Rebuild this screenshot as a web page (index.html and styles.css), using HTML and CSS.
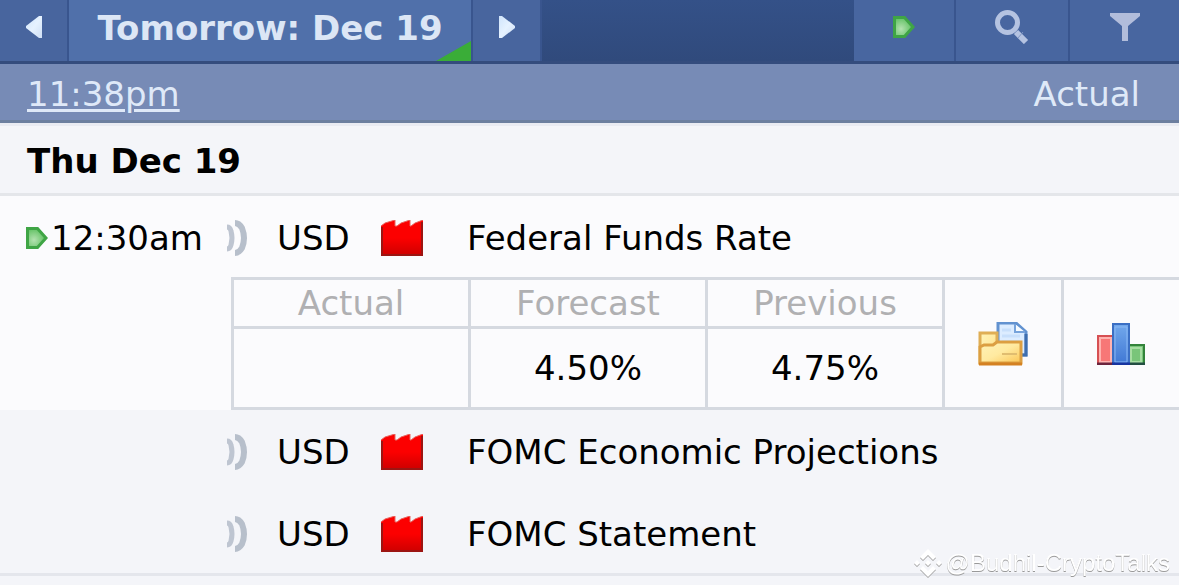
FILE: index.html
```html
<!DOCTYPE html>
<html lang="en">
<head>
<meta charset="utf-8">
<meta name="viewport" content="width=device-width, initial-scale=1">
<title>Economic Calendar</title>
<link rel="stylesheet" href="styles.css">
</head>
<body>
<svg class="defs" aria-hidden="true">
  <defs>
    <radialGradient id="green" cx=".35" cy=".6" r=".6"><stop offset="0" stop-color="#b4e2b0"/><stop offset="1" stop-color="#62c164"/></radialGradient>
    <linearGradient id="pale" x1="0" y1="0" x2="1" y2="1"><stop offset="0" stop-color="#d0e4fb"/><stop offset=".5" stop-color="#e6f2ff"/><stop offset="1" stop-color="#cfdff5"/></linearGradient>
    <linearGradient id="red" x1="0" y1="0" x2="0" y2="1"><stop offset=".5" stop-color="#fc0000"/><stop offset="1" stop-color="#cc0000"/></linearGradient>
    <linearGradient id="folder" x1="0" y1="0" x2="1" y2="1"><stop offset="0" stop-color="#fff3b8"/><stop offset=".5" stop-color="#ffeaa0"/><stop offset="1" stop-color="#fbc554"/></linearGradient>
    <linearGradient id="barblue" x1="0" y1="0" x2="0" y2="1"><stop offset="0" stop-color="#73a9ec"/><stop offset="1" stop-color="#3f77d4"/></linearGradient>
    <symbol id="go" viewBox="0 0 22 22"><path d="M1.500 1.500h10L20 11l-8.500 9.500h-10z" fill="url(#green)" stroke="#3fa545" stroke-width="3"/></symbol>
    <symbol id="sound" viewBox="0 0 24 38"><g fill="none"><path d="M2 8q3 0 4 4 2 7 0 14-1 4-4 4" stroke="#bec5d1" stroke-width="5"/><path d="M10 4q4 0 7 5 4 10 0 20-3 5-7 5" stroke="#b7bfcb" stroke-width="6"/></g></symbol>
    <symbol id="impact" viewBox="0 0 42 36"><path d="M0 6 4 3 14 0v6h2l4-3 9-3v6h1l4-3 8-3v36H0z" fill="url(#red)"/><path d="M0 6 4 3 14 0v6h2l4-3 9-3v6h1l4-3 8-3" fill="none" stroke="#e8645f"/><path d="M1 7v28h40V2" fill="none" stroke="#9c1512" stroke-width="2"/></symbol>
  </defs>
</svg>

<header class="toolbar">
  <button class="tool tool-step" aria-label="Previous day"><svg width="16" height="22" viewBox="0 0 16 22"><path d="M16 0v22h-3L0 12v-2L13 0z" fill="url(#pale)"/></svg></button>
  <button class="tool tool-day">Tomorrow: Dec 19</button>
  <button class="tool tool-step" aria-label="Next day"><svg width="16" height="22" viewBox="0 0 16 22"><path d="M0 0v22h3l13-10v-2L3 0z" fill="url(#pale)"/></svg></button>
  <span class="spacer"></span>
  <button class="tool tool-action" aria-label="Up next"><svg width="22" height="22"><use href="#go"/></svg></button>
  <button class="tool tool-action" aria-label="Search"><svg width="34" height="34" viewBox="0 0 34 34" fill="none" stroke="#b5c3e1"><circle cx="12.500" cy="12.500" r="10" stroke-width="5"/><path d="m21 22 10 10" stroke-width="6"/><path d="M23 28 28 22" stroke="#8096c3" stroke-width="1"/></svg></button>
  <button class="tool tool-action" aria-label="Filter"><svg width="30" height="28" viewBox="0 0 30 28"><path d="M0 0h30v3l-12 10v15h-6V13L0 3z" fill="#b2bddb"/></svg></button>
</header>

<div class="subbar"><a class="clock" href="#">11:38pm</a><span>Actual</span></div>

<main>
  <h1 class="date">Thu Dec 19</h1>
  <section class="event-open">
    <div class="event">
      <span class="time"><svg width="22" height="22"><use href="#go"/></svg><time>12:30am</time></span>
      <svg width="24" height="38"><use href="#sound"/></svg>
      <span>USD</span>
      <svg width="42" height="36"><use href="#impact"/></svg>
      <span>Federal Funds Rate</span>
    </div>
    <div class="figures">
      <table>
        <colgroup><col class="wide"><col class="wide"><col class="wide"><col><col></colgroup>
        <tr>
          <th scope="col">Actual</th><th scope="col">Forecast</th><th scope="col">Previous</th>
          <td rowspan="2"><button class="detail" aria-label="Details"><svg width="50" height="44" viewBox="0 0 50 44"><path d="M20 1h18l10 9v23H20z" fill="#dcecff" stroke="#6292d0" stroke-width="3"/><path d="M24 8h9M24 14h18M24 20h18" stroke="#c8dffb" stroke-width="3"/><path d="M37 2v8h10" fill="#f8fcff" stroke="#77a3db" stroke-width="2"/><path d="M48 12v21h-8" fill="none" stroke="#3f6eae" stroke-width="3"/><path d="M2 11h17v30H2z" fill="url(#folder)" stroke="#dfae55" stroke-width="3"/><path d="M6 23h9l4-3h24v21H2V25z" fill="url(#folder)" stroke="#dc9f42" stroke-width="3"/><path d="M24 32h15" stroke="#e0bd70" stroke-width="2"/><path d="M1 42h43" stroke="#d48122" stroke-width="3"/></svg></button></td>
          <td rowspan="2"><button class="detail" aria-label="Graph"><svg width="48" height="42" viewBox="0 0 48 42"><path d="M1 13h15v28H1z" fill="#f77777" stroke="#d65053" stroke-width="2"/><path d="M3 15h11v24H3z" fill="none" stroke="#ffb3b0" stroke-width="2"/><path d="M32 22h15v19H32z" fill="#79c57a" stroke="#33833b" stroke-width="2"/><path d="M34 25h10v14H34z" fill="none" stroke="#a7dda3" stroke-width="2"/><path d="M16 1h16v40H16z" fill="url(#barblue)" stroke="#3b6fc4" stroke-width="2"/><path d="M18 4h12v35H18z" fill="none" stroke="#8ab8f4" stroke-width="1"/><path d="M0 41h16" stroke="#6c243e" stroke-width="3"/><path d="M15 41h18" stroke="#1734a0" stroke-width="3"/><path d="M33 41h15" stroke="#234e42" stroke-width="3"/></svg></button></td>
        </tr>
        <tr><td class="value"></td><td class="value">4.50%</td><td class="value">4.75%</td></tr>
      </table>
    </div>
  </section>
  <div class="event">
    <span></span>
    <svg width="24" height="38"><use href="#sound"/></svg>
    <span>USD</span>
    <svg width="42" height="36"><use href="#impact"/></svg>
    <span>FOMC Economic Projections</span>
  </div>
  <div class="event event-last">
    <span></span>
    <svg width="24" height="38"><use href="#sound"/></svg>
    <span>USD</span>
    <svg width="42" height="36"><use href="#impact"/></svg>
    <span>FOMC Statement</span>
  </div>
</main>

<div class="credit">
  <svg width="28" height="28" viewBox="0 0 28 28" fill="#fff"><path d="m14 0 8 8-3 3-5-5-5 5-3-3zM3 11l3 3-3 3-3-3zM25 11l3 3-3 3-3-3zM14 11l3 3-3 3-3-3zM9 17l5 5 5-5 3 3-8 8-8-8z"/></svg>
  <span>@Budhil-CryptoTalks</span>
</div>
</body>
</html>
```
FILE: styles.css
```css
* {
  box-sizing: border-box;
}

body {
  margin: 0;
  background: #f4f5f9;
  color: #000;
  font: 34px/40px Verdana, "DejaVu Sans", sans-serif;
}

button {
  border: 0;
  padding: 0;
  background: none;
  color: inherit;
  font: inherit;
}

svg {
  display: block;
}

.defs {
  position: absolute;
  width: 0;
  height: 0;
}

.toolbar {
  display: flex;
  height: 64px;
  border-bottom: 3px solid #344c7d;
  background: linear-gradient(#345188, #304a7c);
}

.tool {
  display: flex;
  justify-content: center;
  align-items: center;
  padding-bottom: 8px;
  border-right: 2px solid #39558e;
  background: #48659e;
}

.tool-step {
  width: 69px;
}

.tool-day {
  position: relative;
  width: 404px;
  padding-bottom: 6px;
  background: #5070aa;
  color: #dce6f5;
  font-weight: bold;
}

.tool-day::after {
  content: "";
  position: absolute;
  right: 0;
  bottom: 0;
  width: 35px;
  height: 20px;
  background: #3aad38;
  clip-path: polygon(100% 0, 100% 100%, 0 100%);
}

.spacer {
  flex: 1;
}

.tool-action {
  width: 114px;
  background: #4866a0;
}

.spacer + .tool-action {
  width: 102px;
}

.tool-action:last-child {
  width: 109px;
  border-right: 0;
}

.subbar {
  display: flex;
  justify-content: space-between;
  align-items: center;
  height: 59px;
  padding: 4px 39px 0 27px;
  border-bottom: 3px solid #6c7f9f;
  background: #778bb6;
  color: #dfe9f8;
}

.clock {
  color: inherit;
  text-decoration-thickness: 3px;
  text-underline-offset: 3px;
}

.date {
  margin: 0;
  padding: 15px 27px 12px;
  border-top: 3px solid #e9ebf2;
  border-bottom: 3px solid #e4e6ea;
  font-size: 34px;
  line-height: 40px;
}

.event-open {
  background: #fbfbfd;
}

.event {
  display: grid;
  grid-template-columns: 199px 52px 104px 86px 1fr;
  align-items: center;
  height: 82px;
  padding: 2px 0 0 26px;
}

.event-open .event {
  height: 81px;
}

.time {
  display: flex;
  align-items: center;
  gap: 3px;
}

.event-last {
  height: 84px;
  border-bottom: 3px solid #e4e6ec;
}

.figures {
  padding-left: 231px;
}

table {
  width: 100%;
  table-layout: fixed;
  border-collapse: separate;
  border-spacing: 0;
  border-top: 3px solid #d5d9e0;
}

.wide {
  width: 25%;
}

th,
td {
  padding: 0;
  border-left: 3px solid #d5d9e0;
  border-bottom: 3px solid #d5d9e0;
  text-align: center;
}

th {
  height: 49px;
  color: #b0b0b2;
  font-weight: normal;
}

.value {
  height: 81px;
}

.detail {
  display: flex;
  justify-content: center;
  width: 100%;
}

.credit {
  position: absolute;
  right: 9px;
  bottom: 8px;
  display: flex;
  align-items: center;
  gap: 4px;
  color: #fff;
  font: 24px/28px "Liberation Sans", Arial, sans-serif;
  filter: drop-shadow(0 1px 0 #999);
}
```
